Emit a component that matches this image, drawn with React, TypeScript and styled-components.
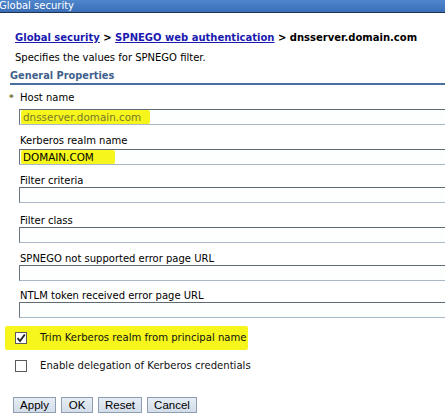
import React from "react";
import styled, { createGlobalStyle } from "styled-components";

const Global = createGlobalStyle`
  html, body { margin: 0; padding: 0; background: #ffffff; }
  body { width: 445px; height: 418px; overflow: hidden; font-family: "DejaVu Sans", Verdana, sans-serif; color: #000; }
`;

const TitleBar = styled.div`
  height: 12px;
  background: linear-gradient(#4f86cc, #3a6fb8);
  border-bottom: 1px solid #1d3350;
  color: #ffffff;
  font-size: 10px;
  line-height: 12px;
  text-indent: -1px;
  white-space: nowrap;
`;

const Page = styled.div`
  padding: 19px 0 0 10px;
`;

const Breadcrumb = styled.div`
  padding-left: 5px;
  font-size: 10px;
  font-weight: bold;
  line-height: 12px;
  white-space: nowrap;
  color: #000;
`;

const Crumb = styled.a`
  color: #1a1ab0;
  text-decoration: underline;
`;

const Description = styled.div`
  padding-left: 5px;
  margin-top: 8px;
  font-size: 10px;
  line-height: 12px;
  white-space: nowrap;
`;

const SectionTitle = styled.div`
  margin-top: 6px;
  font-size: 9.8px;
  font-weight: bold;
  line-height: 12px;
  color: #3f5f8c;
  padding-bottom: 1px;
  border-bottom: 2px solid #4a6f9e;
  white-space: nowrap;
`;

const Fields = styled.div`
  padding: 7px 0 0 9px;
  display: flex;
  flex-direction: column;
`;

const Field = styled.div<{ $gap: number }>`
  margin-bottom: ${(p) => p.$gap}px;
`;

const Label = styled.div`
  position: relative;
  font-size: 10px;
  line-height: 12px;
  white-space: nowrap;
  padding-left: 1px;
`;

const Star = styled.span`
  position: absolute;
  left: -10px;
  top: 0;
  color: #6b6b2a;
  font-size: 9px;
  font-weight: bold;
`;

const Input = styled.div<{ $top: number }>`
  margin-top: ${(p) => p.$top}px;
  height: 16px;
  box-sizing: border-box;
  width: 440px;
  border-top: 1px solid #5e6a74;
  border-left: 1px solid #6a747c;
  border-bottom: 1px solid #a9b8c6;
  background: #fdfffe;
  display: flex;
  align-items: center;
  padding-left: 1px;
`;

const Marked = styled.span<{ $muted?: boolean; $w: number }>`
  display: inline-block;
  width: ${(p) => p.$w}px;
  background: #f6f61c;
  color: ${(p) => (p.$muted ? "#77772a" : "#000")};
  font-size: 10.4px;
  line-height: 14px;
  padding-left: 2px;
  border-radius: 2px;
  white-space: nowrap;
`;

const Checks = styled.div`
  margin: 8px 0 0 -14px;
  display: flex;
  flex-direction: column;
  gap: 4px;
`;

const CheckRow = styled.div<{ $hl?: boolean }>`
  display: flex;
  align-items: center;
  height: 24px;
  width: 243px;
  box-sizing: border-box;
  padding-left: 10px;
  background: ${(p) => (p.$hl ? "#f6f61c" : "transparent")};
  border-radius: 2px;
`;

const Box = styled.span`
  width: 12px;
  height: 12px;
  box-sizing: border-box;
  border: 1px solid #5a5a5a;
  background: #ffffff;
  display: inline-flex;
  align-items: center;
  justify-content: center;
  margin-right: 13px;
  flex: none;
`;

const CheckText = styled.span`
  font-size: 10.1px;
  line-height: 12px;
  white-space: nowrap;
  color: #111;
`;

const Buttons = styled.div`
  margin: 19px 0 0 -6px;
  display: flex;
  gap: 5px;
`;

const Button = styled.button<{ $w: number }>`
  width: ${(p) => p.$w}px;
  height: 16px;
  padding: 0;
  font-family: "Liberation Sans", Arial, sans-serif;
  font-size: 11.5px;
  line-height: 14px;
  color: #000;
  background: linear-gradient(#e6edf5, #d3dde9);
  border: 1px solid #8e9db0;
  border-radius: 0;
`;

const fields: { label: string; value?: string; muted?: boolean; w?: number; top: number; gap: number; star?: boolean }[] = [
  { label: "Host name", value: "dnsserver.domain.com", muted: true, w: 127, top: 5, gap: 10, star: true },
  { label: "Kerberos realm name", value: "DOMAIN.COM", w: 92, top: 2, gap: 10 },
  { label: "Filter criteria", top: 0, gap: 12 },
  { label: "Filter class", top: 0, gap: 10 },
  { label: "SPNEGO not supported error page URL", top: 0, gap: 9 },
  { label: "NTLM token received error page URL", top: 0, gap: 0 },
];

export default function App() {
  return (
    <>
      <Global />
      <TitleBar>Global security</TitleBar>
      <Page>
        <Breadcrumb>
          <Crumb>Global security</Crumb> &gt; <Crumb>SPNEGO web authentication</Crumb> &gt; dnsserver.domain.com
        </Breadcrumb>
        <Description>Specifies the values for SPNEGO filter.</Description>
        <SectionTitle>General Properties</SectionTitle>
        <Fields>
          {fields.map((f) => (
            <Field key={f.label} $gap={f.gap}>
              <Label>
                {f.star && <Star>*</Star>}
                {f.label}
              </Label>
              <Input $top={f.top}>
                {f.value && (
                  <Marked $muted={f.muted} $w={f.w ?? 0}>
                    {f.value}
                  </Marked>
                )}
              </Input>
            </Field>
          ))}
          <Checks>
            <CheckRow $hl>
              <Box>
                <svg width="10" height="10" viewBox="0 0 10 10">
                  <path d="M1.5 5.2 L4 8 L8.8 1.5" fill="none" stroke="#222" strokeWidth="1.8" />
                </svg>
              </Box>
              <CheckText>Trim Kerberos realm from principal name</CheckText>
            </CheckRow>
            <CheckRow>
              <Box />
              <CheckText>Enable delegation of Kerberos credentials</CheckText>
            </CheckRow>
          </Checks>
          <Buttons>
            <Button $w={43}>Apply</Button>
            <Button $w={32}>OK</Button>
            <Button $w={44}>Reset</Button>
            <Button $w={50}>Cancel</Button>
          </Buttons>
        </Fields>
      </Page>
    </>
  );
}
